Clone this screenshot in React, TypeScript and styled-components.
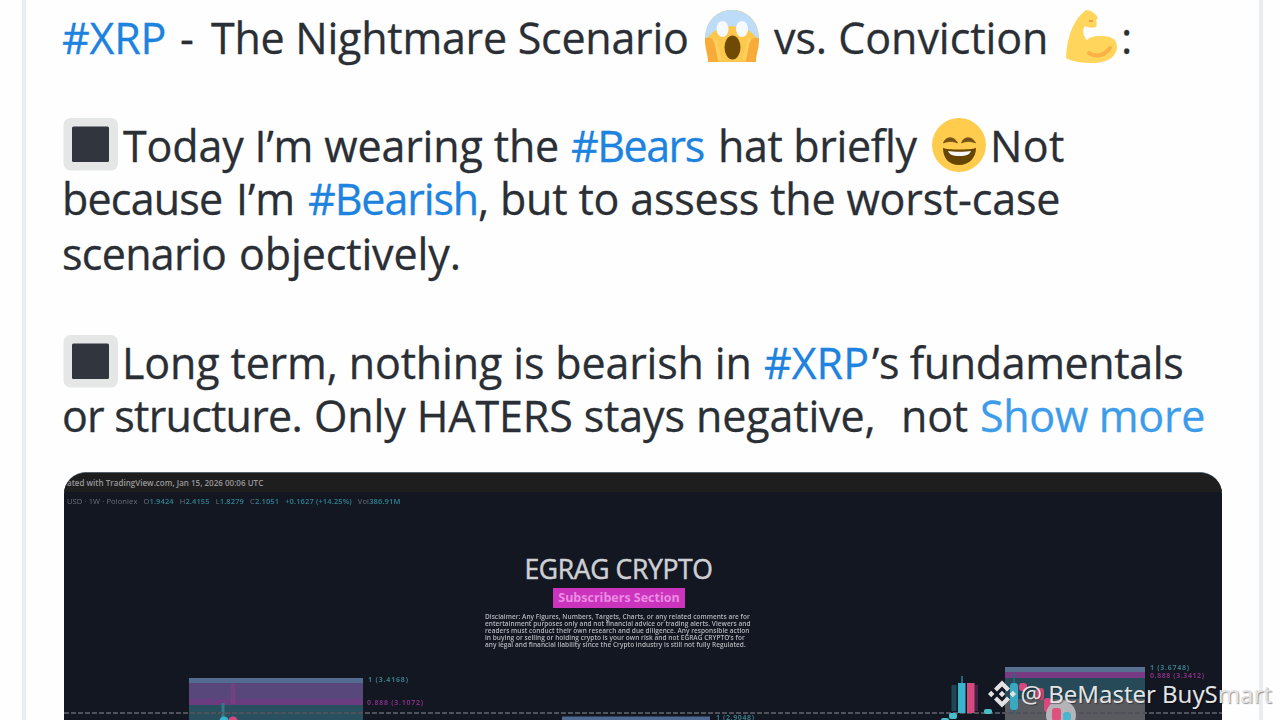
import React from "react";
import styled, { createGlobalStyle } from "styled-components";

// Emojis
const Scream: React.FC = () => (
  <Emoji viewBox="0 0 56 56">
    <path d="M1 34C0 13 12 1 28 1s28 12 27 33L45 53H11z" fill="#fcc84c" />
    <path d="M1 31C1 12 13 1 28 1s27 11 27 30c-5-4-8-10-13-10-7 0-9-4-14-4s-7 4-14 4c-5 0-8 6-13 10z" fill="#bcdcf7" />
    <ellipse cx="18.500" cy="20" rx="6" ry="8" fill="#f7fafc" />
    <ellipse cx="38" cy="20" rx="6" ry="8" fill="#f7fafc" />
    <ellipse cx="28.500" cy="38.500" rx="8" ry="12" fill="#6e4a04" />
    <path d="M1 29c6-1 9 1 10 6l3 18H4C4 44 1 42 1 29z" fill="#f9ab3a" />
    <path d="M55 29c-6-1-9 1-10 6l-3 18h10c0-9 3-11 3-24z" fill="#f9ab3a" />
    <path d="M10 30c4 5 3 14 7 21M46 30c-4 5-3 14-7 21" stroke="#fdd160" strokeWidth="3" fill="none" />
  </Emoji>
);

const Muscle: React.FC = () => (
  <Emoji viewBox="0 0 56 56">
    <path
      d="M21 1C10 9 2 25 1 49c6 4 17 5 27 5 15 0 24-7 24-16S45 27 35 27c-6 0-10 1-13 4-4-4-5-10-2-14 3 2 7 2 11 1 1-3 1-5 0-7l2-2c-2-4-7-8-12-8z"
      fill="#ffd55b"
    />
    <path d="M24 44c8 5 16 2 21-5" stroke="#fab145" strokeWidth="4" fill="none" strokeLinecap="round" />
    <path d="M24 12h4" stroke="#f5a53f" strokeWidth="2" />
  </Emoji>
);

const Grin: React.FC = () => (
  <Emoji viewBox="0 0 56 56">
    <circle cx="28" cy="28" r="27" fill="#ffcc4d" />
    <path d="M12.500 26c2-7 11-7 14 0-4-2-10-2-14 0zM30.500 26c2-7 11-7 14 0-4-2-10-2-14 0z" fill="#765218" stroke="#765218" strokeWidth="0.800" />
    <path d="M12 31c5 2 27 2 33 0 0 9-6 17-17 17S12 40 12 31z" fill="#664500" />
    <path d="M17 34c5 1 18 1 23 0-1 3-4 5-11.500 5S18 37 17 34z" fill="#f7f7fa" />
  </Emoji>
);

const Square: React.FC = () => (
  <Emoji viewBox="0 0 56 56">
    <rect x="1.500" y="1" width="54.500" height="52.500" rx="7" fill="#e4e7e6" />
    <rect x="10" y="9.500" width="37" height="35.500" rx="1.500" fill="#30353e" />
  </Emoji>
);

const Binance: React.FC = () => (
  <svg width="28" height="28" viewBox="0 0 28 28" fill="#e3e3e5">
    <path d="M14 0.500l8 8-3 3-5-5-5 5-3-3z" />
    <path d="M14 27.500l8-8-3-3-5 5-5-5-3 3z" />
    <path d="M14 10.800l3.200 3.200-3.200 3.200-3.200-3.200zM3.200 10.800L6.400 14l-3.200 3.200L0 14zM24.800 10.800L28 14l-3.200 3.200-3.200-3.200z" />
  </svg>
);

const Chart: React.FC = () => (
  <ChartSvg viewBox="64 660 1158 60">
    {/* left zone */}
    <rect x="189" y="677" width="174" height="5.500" fill="#536b8f" />
    <rect x="189" y="682" width="174" height="16" fill="#57477a" />
    <rect x="189" y="698" width="174" height="6" fill="#6b3d80" />
    <rect x="189" y="704" width="174" height="16" fill="#29505f" />
    <rect x="231" y="682" width="4" height="21" fill="#75407f" />
    <path d="M223 702v18" stroke="#35788a" strokeWidth="3" />
    <circle cx="224" cy="720" r="4.500" fill="#35b6cc" />
    <circle cx="233" cy="720" r="4.500" fill="#d8497f" />
    {/* middle zone */}
    <rect x="562" y="715.500" width="148" height="5" fill="#4f6993" />
    {/* right zone */}
    <rect x="1005" y="666" width="140" height="5" fill="#57708f" />
    <rect x="1005" y="671" width="140" height="6" fill="#793a84" />
    <rect x="1005" y="677" width="140" height="21" fill="#274a58" />
    <rect x="1005" y="698" width="140" height="22" fill="#5a5b60" />
    {/* current price */}
    <path d="M64 712h1158" stroke="#50525b" strokeWidth="2" strokeDasharray="5 2" />
    {/* candles */}
    <path d="M962 675v37M1014 672v40" stroke="#256979" strokeWidth="2" />
    <path d="M954 684v26" stroke="#1c4855" strokeWidth="5" />
    <path d="M976 684v26" stroke="#472247" strokeWidth="4" />
    <rect x="958" y="682" width="7.500" height="30" fill="#39b5d0" />
    <rect x="967" y="682" width="7.500" height="30" fill="#d64b7d" />
    <rect x="1010" y="682" width="8" height="27" rx="3" fill="#39a8c2" />
    <rect x="984" y="708" width="8" height="5" rx="2" fill="#49bdc9" />
    <rect x="949" y="712" width="8" height="6" rx="2" fill="#49bdc9" />
    <rect x="941" y="717" width="8" height="4" rx="2" fill="#49bdc9" />
    <rect x="1019" y="682" width="8" height="8" rx="3" fill="#d8477d" />
    <rect x="1036" y="687" width="8" height="12" rx="3" fill="#c94579" />
    <rect x="1044" y="697" width="7" height="14" rx="3" fill="#d8477d" />
    <circle cx="1061" cy="714" r="15" fill="#b5b5b9" />
    <rect x="1052" y="707" width="9" height="13" rx="3" fill="#df527f" />
    <rect x="1063" y="711" width="8" height="9" rx="3" fill="#4bb5d0" />
    <path d="M1042 720h18" stroke="#dda43f" strokeWidth="2" />
    <SmallLabel x="368" y="681" fill="#397986" textLength="40">1 (3.4168)</SmallLabel>
    <SmallLabel x="367" y="704" fill="#822f80" textLength="56">0.888 (3.1072)</SmallLabel>
    <SmallLabel x="716" y="719" fill="#397986" textLength="38">1 (2.9048)</SmallLabel>
    <SmallLabel x="1150" y="669" fill="#397986" textLength="39">1 (3.6748)</SmallLabel>
    <SmallLabel x="1150" y="677" fill="#822f80" textLength="54">0.888 (3.3412)</SmallLabel>
  </ChartSvg>
);

const App: React.FC = () => {
  return (
    <Page>
      <GlobalStyle />
      <Post>
        <Line>
          <Text $width={118} $spacing={-0.2} $link>#XRP</Text>
          <Text $width={31} $spacing={0}>-</Text>
          <Text $width={493} $spacing={-0.25}>The Nightmare Scenario</Text>
          <Scream />
          <Text $width={291} $spacing={-0.05} $before={14}>vs. Conviction</Text>
          <Muscle />
          <Text $width={12} $spacing={0}>:</Text>
        </Line>
        <Line />
        <Line>
          <Square />
          <Text $width={448} $spacing={-0.15} $before={5}>Today I’m wearing the</Text>
          <Text $width={147} $spacing={-1.5} $link>#Bears</Text>
          <Text $width={213} $spacing={-0.35}>hat briefly</Text>
          <Grin />
          <Text $width={80} $spacing={0.4} $before={3}>Not</Text>
        </Line>
        <Line $raised>
          <Text $width={174} $spacing={-0.8}>because</Text>
          <Text $width={72} $spacing={0}>I’m</Text>
          <Text $width={170} $spacing={-1.1} $link>#Bearish</Text>
          <Text $width={600} $spacing={-0.18}>, but to assess the worst-case</Text>
        </Line>
        <Line>
          <Text $width={177} $spacing={-0.7}>scenario</Text>
          <Text $width={240} $spacing={-0.12}>objectively.</Text>
        </Line>
        <Line />
        <Line>
          <Square />
          <Text $width={642} $spacing={-0.15} $before={4}>Long term, nothing is bearish in</Text>
          <Text $width={107} $spacing={0} $link>#XRP</Text>
          <Text $width={312} $spacing={-0.4} $before={1}>’s fundamentals</Text>
        </Line>
        <Line $raised>
          <Text $width={252} $spacing={-0.75}>or structure.</Text>
          <Text $width={587} $spacing={-0.12}>Only HATERS stays negative,</Text>
          <Text $width={79} $spacing={-0.2}>not</Text>
          <Text $width={226} $spacing={-0.3} $link $light>Show more</Text>
        </Line>

        <Media>
          <TopBar>ated with TradingView.com, Jan 15, 2026 00:06 UTC</TopBar>
          <Legend>
            <span>USD · 1W · Poloniex</span>
            <span>O<b>1.9424</b></span>
            <span>H<b>2.4155</b></span>
            <span>L<b>1.8279</b></span>
            <span>C<b>2.1051</b></span>
            <b>+0.1627 (+14.25%)</b>
            <span>Vol<b>386.91M</b></span>
          </Legend>
          <Title>EGRAG CRYPTO</Title>
          <Badge>Subscribers Section</Badge>
          <Disclaimer>
            <p>Disclaimer: Any Figures, Numbers, Targets, Charts, or any related comments are for</p>
            <p>entertainment purposes only and not financial advice or trading alerts. Viewers and</p>
            <p>readers must conduct their own research and due diligence. Any responsible action</p>
            <p>in buying or selling or holding crypto is your own risk and not EGRAG CRYPTO’s for</p>
            <p>any legal and financial liability since the Crypto industry is still not fully Regulated.</p>
          </Disclaimer>
          <Chart />
        </Media>
      </Post>
      <Watermark>
        <Binance />
        <span>@ BeMaster BuySmart</span>
      </Watermark>
    </Page>
  );
};

export default App;

// Styled Components
const GlobalStyle = createGlobalStyle`
  * {
    box-sizing: border-box;
  }

  body {
    margin: 0;
    overflow: hidden;
    background: #fefefe;
  }

  p {
    margin: 0;
  }
`;

const Page = styled.div`
  position: relative;
  width: 1280px;
  height: 720px;
  padding: 0 17px 0 22px;
  overflow: hidden;
  font-family: "Open Sans", "Noto Sans", sans-serif;
`;

const Post = styled.main`
  height: 720px;
  padding: 11px 36px 0;
  border: solid #e8edef;
  border-width: 0 4.5px;
  color: #2a2f36;
`;

const Line = styled.div<{ $raised?: boolean }>`
  display: flex;
  align-items: center;
  height: 54.1px;
  padding-bottom: ${({ $raised }) => ($raised ? 2 : 0)}px;
  font-size: 43px;
  line-height: 52px;
  white-space: pre;
`;

const Text = styled.span<{
  $width: number;
  $spacing: number;
  $before?: number;
  $link?: boolean;
  $light?: boolean;
}>`
  flex: none;
  width: ${({ $width }) => $width}px;
  margin-left: ${({ $before }) => $before ?? 0}px;
  letter-spacing: ${({ $spacing }) => $spacing}px;
  color: ${({ $link, $light }) => ($light ? "#3d9cea" : $link ? "#1d83df" : "inherit")};
  -webkit-text-stroke: 0.3px currentColor;
`;

const Emoji = styled.svg`
  flex: none;
  width: 56px;
  height: 56px;
  margin-bottom: 2px;
`;

const Media = styled.section`
  display: flex;
  flex-direction: column;
  align-items: center;
  width: 1158px;
  height: 249px;
  margin: 28px 0 0 2px;
  border-top: 1px solid #55606a;
  border-radius: 22px 22px 0 0;
  background: #131722;
  overflow: hidden;
`;

const TopBar = styled.div`
  width: 100%;
  height: 19px;
  padding-left: 3px;
  background: #1e1e1f;
  color: #98989a;
  font-size: 8px;
  font-weight: 600;
  line-height: 19px;
  letter-spacing: 0.02px;
`;

const Legend = styled.div`
  display: flex;
  gap: 6px;
  width: 100%;
  height: 18px;
  padding-left: 3px;
  color: #6c7079;
  font-size: 7.500px;
  line-height: 18px;
  letter-spacing: 0.13px;
  filter: blur(0.4px);

  b {
    font-weight: 600;
    color: #2f8392;
  }
`;

const Title = styled.h1`
  margin: 41px 49px 0 0;
  color: #cfd0d3;
  font-size: 26.500px;
  font-weight: 500;
  line-height: 37px;
  letter-spacing: -0.35px;
  -webkit-text-stroke: 0.5px currentColor;
  white-space: nowrap;
`;

const Badge = styled.div`
  width: 132px;
  height: 20px;
  margin: 0 48px 0 0;
  background: #cb35bd;
  color: #eb8be3;
  font-size: 12.500px;
  font-weight: 700;
  line-height: 20px;
  text-align: center;
  white-space: nowrap;
`;

const Disclaimer = styled.div`
  width: 266px;
  margin: 5px 50px 0 0;
  color: #b4b6ba;
  font-size: 6.500px;
  font-weight: 600;
  line-height: 7px;
  letter-spacing: 0.04px;
  white-space: nowrap;
  filter: blur(0.4px);
`;

const ChartSvg = styled.svg`
  flex: none;
  width: 1158px;
  height: 60px;
  margin-top: auto;
`;

const SmallLabel = styled.text`
  font-size: 7px;
  font-weight: 700;
  filter: blur(0.4px);
`;

// Lies over the bottom right corner of the post
const Watermark = styled.div`
  position: absolute;
  right: 8px;
  bottom: 10px;
  display: flex;
  align-items: center;
  gap: 5px;
  color: #e3e3e5;
  font-family: "Noto Sans", sans-serif;
  font-size: 24px;
  line-height: 32px;
  letter-spacing: -0.05px;
  white-space: nowrap;
  text-shadow: 1px 1px 1px rgba(0, 0, 0, 0.4);
`;
